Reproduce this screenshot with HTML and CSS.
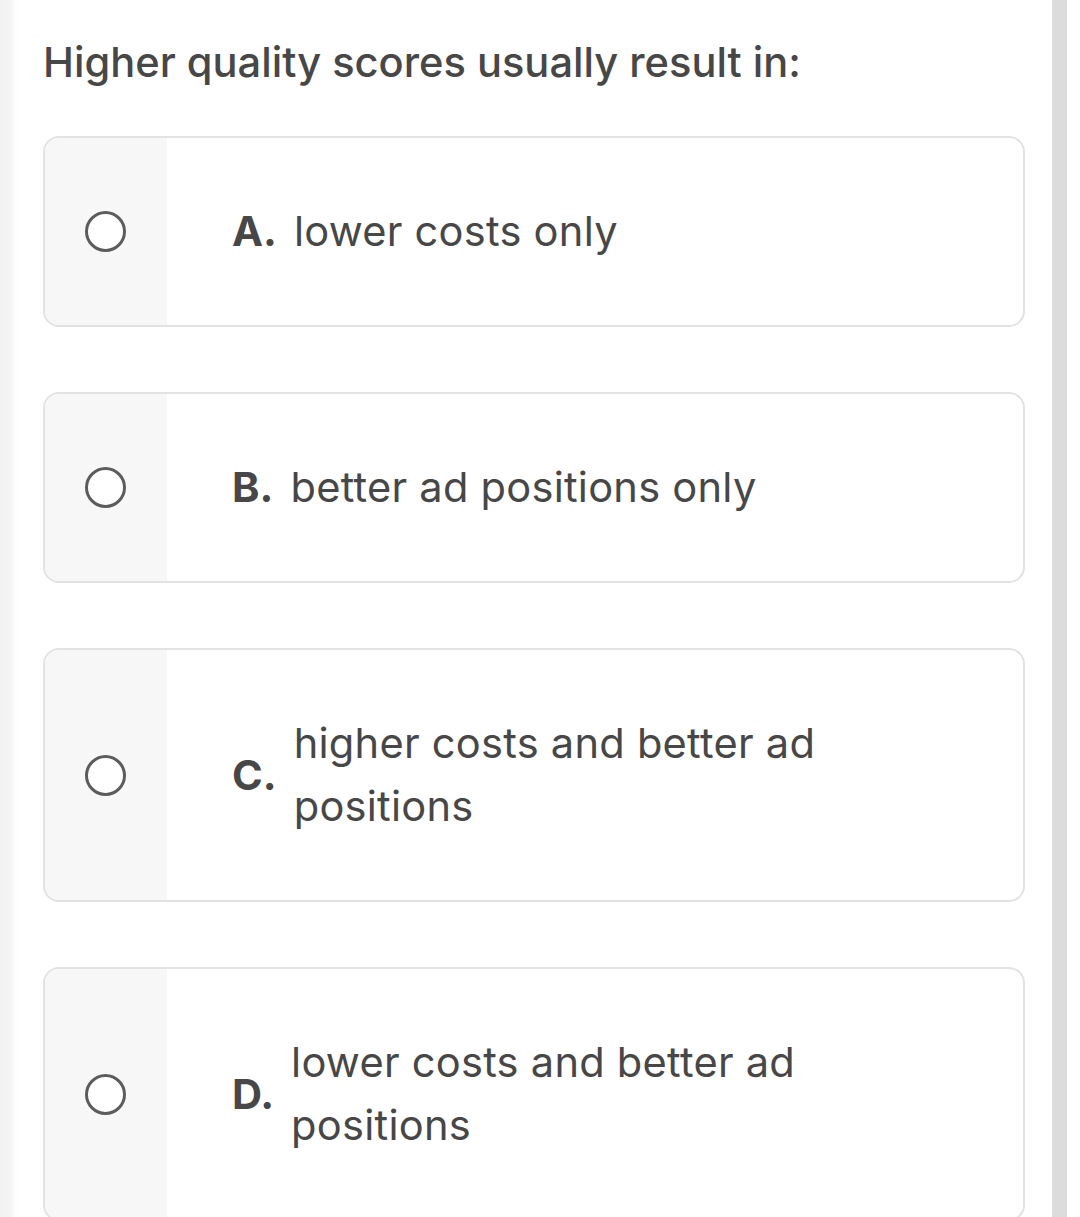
FILE: index.html
```html
<!DOCTYPE html>
<html lang="en">
<head>
<meta charset="utf-8">
<title>Quiz question</title>
<link rel="stylesheet" href="styles.css">
</head>
<body>
<div class="page">
  <main class="main">
    <h1 class="question">Higher quality scores usually result in:</h1>
    <div class="options">
      <label class="option">
        <span class="radio-cell"><span class="radio"></span></span>
        <span class="content"><span class="letter">A.</span><span class="text">lower costs only</span></span>
      </label>
      <label class="option">
        <span class="radio-cell"><span class="radio"></span></span>
        <span class="content"><span class="letter">B.</span><span class="text">better ad positions only</span></span>
      </label>
      <label class="option">
        <span class="radio-cell"><span class="radio"></span></span>
        <span class="content"><span class="letter">C.</span><span class="text">higher costs and better ad positions</span></span>
      </label>
      <label class="option">
        <span class="radio-cell"><span class="radio"></span></span>
        <span class="content"><span class="letter">D.</span><span class="text">lower costs and better ad positions</span></span>
      </label>
    </div>
  </main>
  <div class="scrollbar"></div>
</div>
</body>
</html>
```
FILE: styles.css
```css
html, body {
  margin: 0;
  padding: 0;
}
body {
  font-family: Inter, "Noto Sans", sans-serif;
  color: #474747;
  background: linear-gradient(to right, #f2f2f2 0, #f5f5f5 11px, #fcfcfc 15px, #ffffff 18px);
  height: 1217px;
  overflow: hidden;
}
.page {
  display: flex;
  height: 1217px;
}
.main {
  flex: 1;
  padding-left: 43px;
  padding-right: 27px;
}
.question {
  margin: 0;
  padding-top: 38px;
  font-size: 41.6px;
  font-weight: 500;
  line-height: 48px;
  color: #474747;
}
.options {
  margin-top: 50px;
  display: flex;
  flex-direction: column;
  gap: 65px;
}
.option {
  display: flex;
  border: 2px solid #e2e2e2;
  border-radius: 16px;
  overflow: hidden;
  background: #ffffff;
}
.radio-cell {
  width: 122px;
  flex: none;
  background: #f7f7f7;
  display: flex;
  align-items: center;
  justify-content: center;
  padding-right: 2px;
  box-sizing: border-box;
}
.radio {
  width: 35px;
  height: 35px;
  border: 3px solid #5c5c5c;
  border-radius: 50%;
  background: #fff;
}
.content {
  flex: 1;
  display: flex;
  align-items: center;
  padding: 62px 130px 62px 65px;
  font-size: 41.6px;
  line-height: 63px;
}
.letter {
  font-weight: 700;
  margin-right: 17px;
  flex: none;
}
.text {
  font-weight: 400;
  letter-spacing: 0.25px;
}
.scrollbar {
  width: 15px;
  flex: none;
  background: #dcdcdc;
  margin-right: 13px;
}
```
